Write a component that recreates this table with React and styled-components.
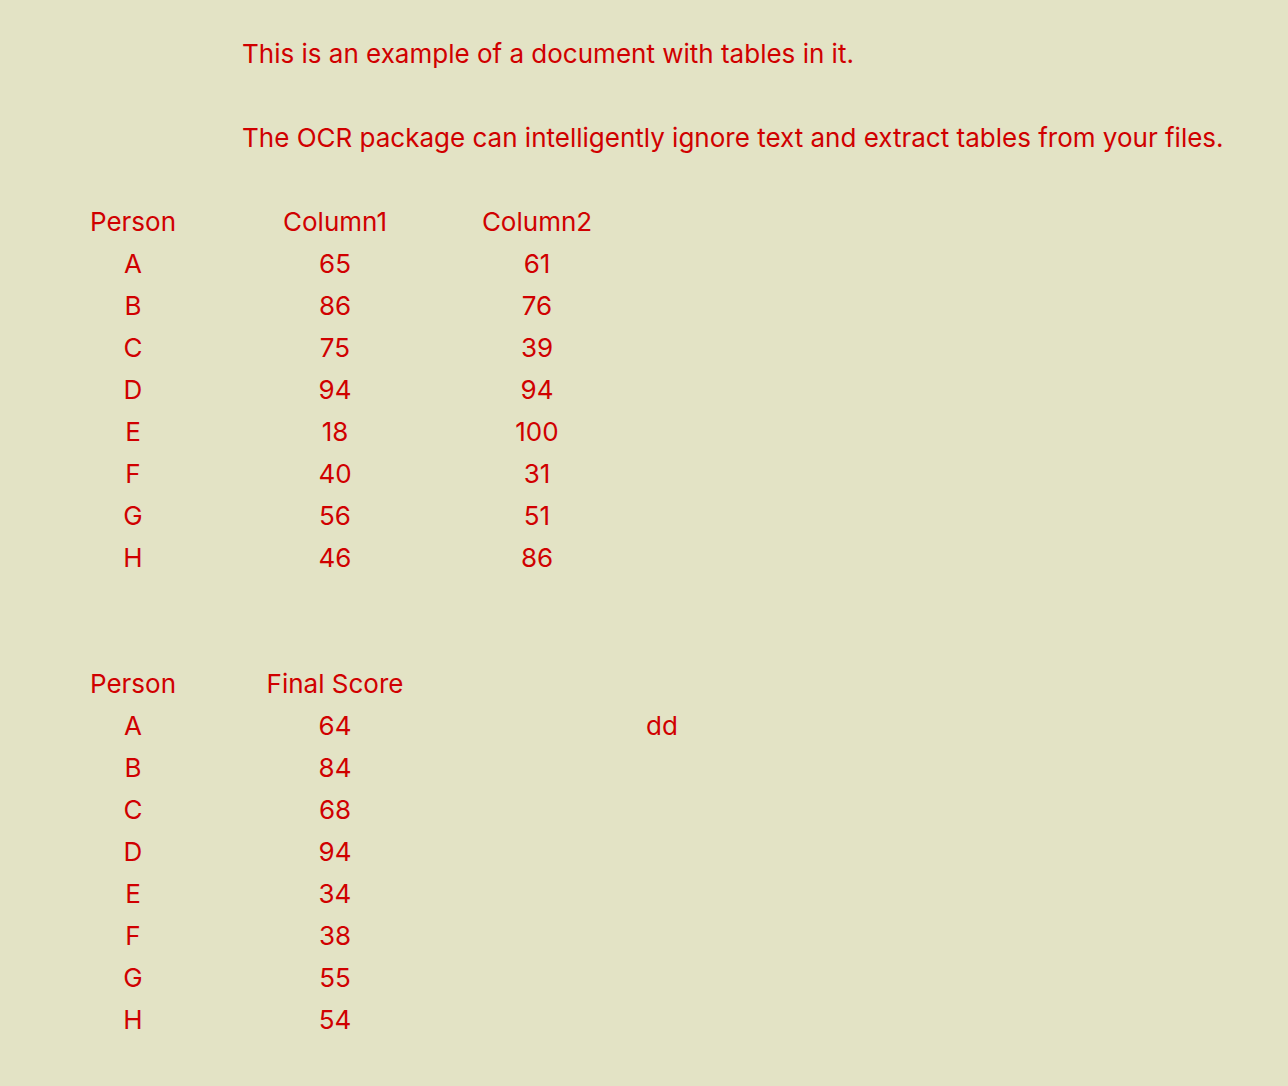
import React from "react";
import styled, { createGlobalStyle } from "styled-components";

const Global = createGlobalStyle`
  html, body { margin: 0; padding: 0; background: #e3e3c5; }
  body { font-family: Inter, "Noto Sans", sans-serif; color: #d00000; }
`;

const Sheet = styled.div`
  padding: 32px;
  display: grid;
  grid-template-columns: repeat(6, 202px);
  grid-auto-rows: 42px;
  font-size: 26px;
`;

const Cell = styled.div`
  display: flex;
  align-items: center;
  justify-content: ${(p) => (p.$center ? "center" : "flex-start")};
  padding: 0 8px;
  white-space: nowrap;
  overflow: visible;
  grid-column: ${(p) => p.$col} / span 1;
  grid-row: ${(p) => p.$row};
  min-width: 0;
`;

const t1 = [
  ["A", 65, 61], ["B", 86, 76], ["C", 75, 39], ["D", 94, 94],
  ["E", 18, 100], ["F", 40, 31], ["G", 56, 51], ["H", 46, 86],
];
const t2 = [
  ["A", 64], ["B", 84], ["C", 68], ["D", 94],
  ["E", 34], ["F", 38], ["G", 55], ["H", 54],
];

export default function App() {
  return (
    <>
      <Global />
      <Sheet>
        <Cell $col={2} $row={1}>This is an example of a document with tables in it.</Cell>
        <Cell $col={2} $row={3}>The OCR package can intelligently ignore text and extract tables from your files.</Cell>

        <Cell $col={1} $row={5} $center>Person</Cell>
        <Cell $col={2} $row={5} $center>Column1</Cell>
        <Cell $col={3} $row={5} $center>Column2</Cell>
        {t1.map((r, i) => (
          <React.Fragment key={r[0]}>
            <Cell $col={1} $row={6 + i} $center>{r[0]}</Cell>
            <Cell $col={2} $row={6 + i} $center>{r[1]}</Cell>
            <Cell $col={3} $row={6 + i} $center>{r[2]}</Cell>
          </React.Fragment>
        ))}

        <Cell $col={1} $row={16} $center>Person</Cell>
        <Cell $col={2} $row={16} $center>Final Score</Cell>
        {t2.map((r, i) => (
          <React.Fragment key={"b" + r[0]}>
            <Cell $col={1} $row={17 + i} $center>{r[0]}</Cell>
            <Cell $col={2} $row={17 + i} $center>{r[1]}</Cell>
          </React.Fragment>
        ))}
        <Cell $col={4} $row={17}>dd</Cell>
      </Sheet>
    </>
  );
}
